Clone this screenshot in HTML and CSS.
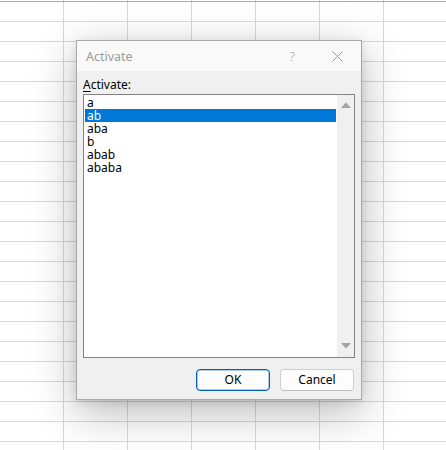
FILE: index.html
```html
<!DOCTYPE html>
<html>
<head>
<meta charset="utf-8">
<link rel="stylesheet" href="styles.css">
</head>
<body>
<div class="sheet">
  <div class="dialog">
    <div class="titlebar">
      <span class="title">Activate</span>
      <span class="help">?</span>
      <svg class="close" width="11" height="11" viewBox="0 0 11 11"><path d="M0.5 0.5 L10.5 10.5 M10.5 0.5 L0.5 10.5" stroke="#9a9a9a" stroke-width="1" fill="none"/></svg>
    </div>
    <div class="body">
      <div class="label"><u>A</u>ctivate:</div>
      <div class="listbox">
        <ul class="items">
          <li>a</li>
          <li class="selected">ab</li>
          <li>aba</li>
          <li>b</li>
          <li>abab</li>
          <li>ababa</li>
        </ul>
        <div class="scrollbar">
          <svg width="10" height="6" viewBox="0 0 10 6"><path d="M0 6 L5 0.5 L10 6 Z" fill="#a3a3a3"/></svg>
          <svg width="10" height="6" viewBox="0 0 10 6"><path d="M0 0 L5 5.5 L10 0 Z" fill="#a3a3a3"/></svg>
        </div>
      </div>
      <div class="buttons">
        <button class="btn default">OK</button>
        <button class="btn">Cancel</button>
      </div>
    </div>
  </div>
</div>
</body>
</html>
```
FILE: styles.css
```css
html, body {
  margin: 0;
  padding: 0;
}
body {
  width: 446px;
  height: 450px;
  overflow: hidden;
  font-family: "Noto Sans", "Open Sans", sans-serif;
  font-size: 12px;
}
.sheet {
  width: 446px;
  height: 450px;
  background-color: #ffffff;
  background-image:
    linear-gradient(to bottom, #a9a9a9 1px, transparent 1px),
    linear-gradient(to right, #d9d9d9 1px, transparent 1px),
    linear-gradient(to bottom, #d9d9d9 1px, transparent 1px);
  background-size: 100% 450px, 64px 100%, 100% 20px;
  background-position: 0 1px, 63px 0, 0 1px;
  background-repeat: no-repeat, repeat, repeat;
  padding: 40px 0 0 76px;
  box-sizing: border-box;
}
.dialog {
  width: 286px;
  height: 360px;
  box-sizing: border-box;
  border: 1px solid #a8a8a8;
  background: #f0f0f0;
  box-shadow: 0 12px 42px rgba(0, 0, 0, 0.28), 0 2px 8px rgba(0, 0, 0, 0.10);
  display: flex;
  flex-direction: column;
}
.titlebar {
  height: 30px;
  background: #f9f9f9;
  display: flex;
  align-items: center;
  padding-left: 9px;
  color: #9a9a9a;
}
.title {
  font-size: 12.5px;
  flex: 1;
}
.help {
  font-size: 13px;
  font-weight: 300;
  margin-right: 37px;
  color: #a0a0a0;
}
.close {
  margin-right: 18px;
}
.body {
  padding: 6px 6px 8px 6px;
  display: flex;
  flex-direction: column;
}
.label {
  line-height: 16px;
  height: 16px;
  margin-bottom: 1px;
  color: #000;
}
.label u {
  text-decoration-thickness: 1px;
  text-underline-offset: 2px;
}
.listbox {
  height: 264px;
  box-sizing: border-box;
  border: 1px solid #838383;
  background: #fff;
  display: flex;
}
.items {
  list-style: none;
  margin: 0;
  padding: 1px 1px 0 1px;
  flex: 1;
}
.items li {
  height: 13px;
  line-height: 13px;
  padding-left: 2px;
  color: #000;
}
.items li.selected {
  background: #0078d7;
  color: #fff;
}
.scrollbar {
  width: 17px;
  background: #f0f0f0;
  display: flex;
  flex-direction: column;
  justify-content: space-between;
  align-items: center;
  padding: 7px 0 8px 0;
}
.buttons {
  margin-top: 11px;
  display: flex;
  justify-content: flex-end;
  gap: 10px;
  padding-right: 1px;
}
.btn {
  width: 74px;
  height: 22px;
  box-sizing: border-box;
  border: 1px solid #d0d0d0;
  border-bottom-color: #bdbdbd;
  border-radius: 4px;
  background: #fdfdfd;
  font-family: "Noto Sans", "Open Sans", sans-serif;
  font-size: 12px;
  color: #000;
  padding: 0;
  line-height: 18px;
}
.btn.default {
  border: 1px solid #005fb8;
  box-shadow: inset 0 0 0 1px rgba(0, 95, 184, 0.3);
}
```
